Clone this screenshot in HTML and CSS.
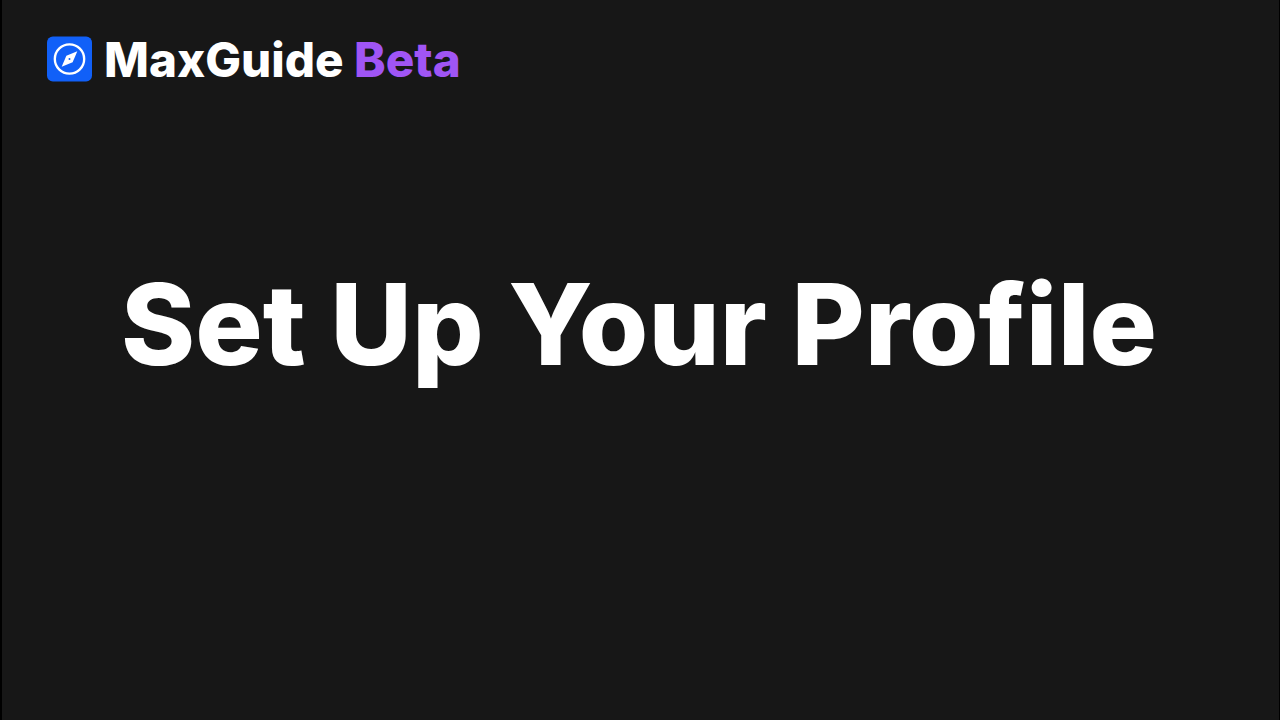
FILE: index.html
```html
<!DOCTYPE html>
<html lang="en">
<head>
<meta charset="utf-8">
<title>MaxGuide Beta</title>
<link rel="stylesheet" href="styles.css">
</head>
<body>
<main class="screen">
  <header class="brand">
    <svg class="brand-icon" viewBox="0 0 46 46" aria-hidden="true">
      <rect width="46" height="46" rx="6" fill="#1160f8"/>
      <circle cx="23" cy="23" r="15" fill="none" stroke="#fff" stroke-width="2.4"/>
      <path d="M31 15 L26.2 26.2 L15 31 L19.8 19.8 Z" fill="#fff"/>
      <circle cx="23" cy="23" r="1" fill="#1160f8"/>
    </svg>
    <span class="brand-name">MaxGuide <span class="brand-tag">Beta</span></span>
  </header>
  <h1 class="title">Set Up Your Profile</h1>
</main>
</body>
</html>
```
FILE: styles.css
```css
* { box-sizing: border-box; }
html, body { margin: 0; height: 100%; background: #000; }
body { overflow: hidden; font-family: Inter, "Liberation Sans", sans-serif; }
.screen {
  width: 1280px;
  height: 720px;
  background: #171717;
  border-left: 2px solid #000;
  border-right: 1px solid #000;
  padding: 36px 0 0 45px;
  display: flex;
  flex-direction: column;
}
.brand { display: flex; align-items: center; gap: 12px; height: 46px; }
.brand-icon { width: 45px; height: 46px; flex: none; }
.brand-name { font-size: 47.6px; font-weight: 800; color: #fff; line-height: 46px; padding-top: 2px; }
.brand-tag { color: #a055f5; }
.title {
  margin: 167px 0 0 -48px;
  text-align: center;
  font-size: 112.4px;
  font-weight: 800;
  line-height: 150px;
  color: #fff;
}
```
